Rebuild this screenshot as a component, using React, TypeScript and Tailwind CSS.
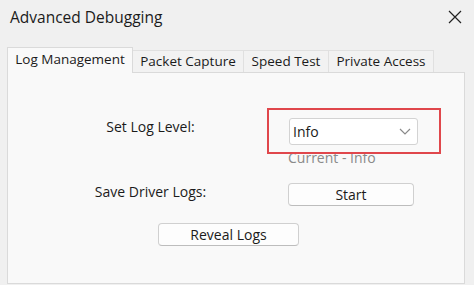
import React from "react";

const font = { fontFamily: '"Open Sans", "Noto Sans", Arial, sans-serif' };

export default function App() {
  return (
    <div
      className="w-[474px] h-[285px] overflow-hidden bg-[#f0f0f0] text-[#1b1b1b]"
      style={font}
    >
      {/* Title bar */}
      <div className="h-[34px] flex items-center justify-between pl-[10px] pr-[12px]">
        <span className="text-[15.5px] leading-[20px] -mt-[1px]">Advanced Debugging</span>
        <svg width="14" height="14" viewBox="0 0 14 14" className="-mt-[1px]">
          <path d="M1 1 L13 13 M13 1 L1 13" stroke="#222" strokeWidth="1.2" fill="none" />
        </svg>
      </div>

      {/* Tabs */}
      <div className="pt-[13px] ml-[7px] flex items-end relative z-10">
        <div className="w-[126px] h-[26px] bg-[#f9f9f9] border border-b-0 border-[#dadada] flex items-center justify-center text-[13.5px] -mb-px pb-[2px]">
          Log Management
        </div>
        <div className="w-[111px] h-[22px] bg-[#f2f2f2] border border-l-0 border-b-0 border-[#e0e0e0] flex items-center justify-center text-[13.5px]">
          Packet Capture
        </div>
        <div className="w-[85px] h-[22px] bg-[#f2f2f2] border border-l-0 border-b-0 border-[#e0e0e0] flex items-center justify-center text-[13.5px]">
          Speed Test
        </div>
        <div className="w-[105px] h-[22px] bg-[#f2f2f2] border border-l-0 border-b-0 border-[#e0e0e0] flex items-center justify-center text-[13.5px]">
          Private Access
        </div>
      </div>

      {/* Panel */}
      <div className="ml-[7px] w-[458px] h-[212px] bg-[#f9f9f9] border border-[#dadada] pt-[45px] text-[14px]">
        {/* Row 1 */}
        <div className="flex">
          <div className="w-[280px] pl-[5px] text-center leading-[18px]">Set Log Level:</div>
          <div className="flex flex-col">
            <div className="relative ml-[1px]">
              <div className="w-[129px] h-[27px] bg-white border border-[#d3d3d3] rounded-[3px] flex items-center justify-between pl-[3px] pr-[6px]">
                <span className="leading-[18px]">Info</span>
                <svg width="12" height="7" viewBox="0 0 12 7">
                  <path d="M1 1 L6 6 L11 1" stroke="#8a8a8a" strokeWidth="1.2" fill="none" />
                </svg>
              </div>
              <div className="absolute left-[-22px] top-[-10px] w-[174px] h-[46px] border-2 border-[#e0474c]" />
            </div>
            <div className="ml-[0px] mt-[5px] leading-[16px] text-[#8a8a8a]">Current - Info</div>
          </div>
        </div>

        {/* Row 2 */}
        <div className="flex mt-[17px]">
          <div className="w-[280px] pl-[5px] text-center leading-[18px]">Save Driver Logs:</div>
          <button className="w-[126px] h-[23px] bg-[#fdfdfd] border border-[#d0d0d0] border-b-[#bdbdbd] rounded-[4px] flex items-center justify-center leading-[18px]">
            Start
          </button>
        </div>

        {/* Row 3 */}
        <div className="mt-[17px] ml-[150px]">
          <button className="w-[141px] h-[23px] bg-[#fdfdfd] border border-[#d0d0d0] border-b-[#bdbdbd] rounded-[4px] flex items-center justify-center leading-[18px]">
            Reveal Logs
          </button>
        </div>
      </div>
    </div>
  );
}
